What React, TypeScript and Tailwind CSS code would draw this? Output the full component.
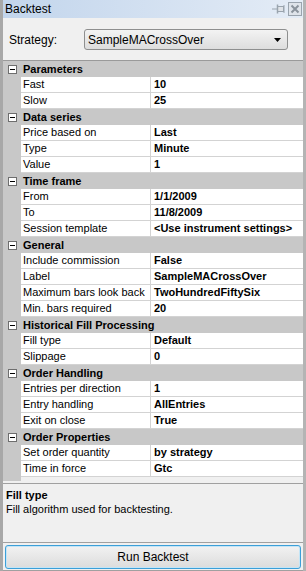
import React from "react";

type Row = { name: string; value: string };
type Category = { title: string; rows: Row[] };

const categories: Category[] = [
    {
        title: "Parameters",
        rows: [
            { name: "Fast", value: "10" },
            { name: "Slow", value: "25" },
        ],
    },
    {
        title: "Data series",
        rows: [
            { name: "Price based on", value: "Last" },
            { name: "Type", value: "Minute" },
            { name: "Value", value: "1" },
        ],
    },
    {
        title: "Time frame",
        rows: [
            { name: "From", value: "1/1/2009" },
            { name: "To", value: "11/8/2009" },
            { name: "Session template", value: "<Use instrument settings>" },
        ],
    },
    {
        title: "General",
        rows: [
            { name: "Include commission", value: "False" },
            { name: "Label", value: "SampleMACrossOver" },
            { name: "Maximum bars look back", value: "TwoHundredFiftySix" },
            { name: "Min. bars required", value: "20" },
        ],
    },
    {
        title: "Historical Fill Processing",
        rows: [
            { name: "Fill type", value: "Default" },
            { name: "Slippage", value: "0" },
        ],
    },
    {
        title: "Order Handling",
        rows: [
            { name: "Entries per direction", value: "1" },
            { name: "Entry handling", value: "AllEntries" },
            { name: "Exit on close", value: "True" },
        ],
    },
    {
        title: "Order Properties",
        rows: [
            { name: "Set order quantity", value: "by strategy" },
            { name: "Time in force", value: "Gtc" },
        ],
    },
];

function MinusBox() {
    return (
        <svg width="9" height="9" viewBox="0 0 9 9" className="block">
            <rect x="0.5" y="0.5" width="8" height="8" fill="#ffffff" stroke="#6e6e6e" />
            <line x1="2" y1="4.5" x2="7" y2="4.5" stroke="#000" />
        </svg>
    );
}

function CategoryHeader({ title }: { title: string }) {
    return (
        <div className="flex h-[16px] items-center bg-[#c8c8c8]">
            <div className="flex w-[18px] justify-center pl-[1px]">
                <MinusBox />
            </div>
            <span className="pl-[2px] font-bold">{title}</span>
        </div>
    );
}

function PropertyRow({ name, value }: Row) {
    return (
        <div className="flex h-[16px] bg-[#c8c8c8]">
            <div className="w-[18px]" />
            <div className="flex w-[130px] items-center border-b border-r border-[#d3d3d3] bg-white pl-[2px]">
                {name}
            </div>
            <div className="flex flex-1 items-center overflow-hidden whitespace-nowrap border-b border-[#d3d3d3] bg-white pl-[3px] font-bold">
                {value}
            </div>
        </div>
    );
}

export default function App() {
    return (
        <div
            className="flex h-[571px] w-[306px] flex-col border-l-[3px] border-r-[3px] border-l-[#a8a8a8] border-r-[#b4b4b4] bg-[#f0f0f0] text-[11px] text-black"
            style={{ fontFamily: '"Liberation Sans", Arial, sans-serif' }}
        >
            <div className="flex h-[18px] items-center justify-between bg-gradient-to-r from-[#c2d5ec] to-[#e4ecf6] pl-[2px] pr-[1px]">
                <span className="text-[12px]">Backtest</span>
                <div className="flex items-center gap-[1px]">
                    <svg width="16" height="12" viewBox="0 0 16 12">
                        <line x1="1" y1="6" x2="6" y2="6" stroke="#9aa4ae" strokeWidth="1" />
                        <rect x="6.5" y="3.5" width="6" height="5" fill="#dfe3e8" stroke="#9aa4ae" />
                        <line x1="6.5" y1="1.5" x2="6.5" y2="10.5" stroke="#9aa4ae" strokeWidth="1.5" />
                        <line x1="13" y1="2" x2="13" y2="10" stroke="#9aa4ae" />
                    </svg>
                    <svg width="14" height="14" viewBox="0 0 14 14">
                        <rect x="0.5" y="0.5" width="13" height="13" fill="#dfe4ea" stroke="#9aa4ae" />
                        <path d="M3.5 3.5 L10.5 10.5 M10.5 3.5 L3.5 10.5" stroke="#8a939c" strokeWidth="2" />
                    </svg>
                </div>
            </div>

            <div className="flex h-[42px] items-center pl-[6px] pr-[15px] pt-[1px]">
                <span className="w-[75px] text-[12px]">Strategy:</span>
                <div className="flex h-[21px] flex-1 items-center justify-between rounded-[3px] border border-[#8e8f8f] bg-gradient-to-b from-[#f3f3f3] to-[#dddddd] pl-[3px] pr-[6px]">
                    <span className="text-[12px]">SampleMACrossOver</span>
                    <svg width="7" height="4" viewBox="0 0 7 4">
                        <path d="M0 0 H7 L3.5 4 Z" fill="#000" />
                    </svg>
                </div>
            </div>

            <div className="flex h-[421px] flex-col border-t border-[#9a9a9a] bg-[#f0f0f0]">
                {categories.map((c) => (
                    <React.Fragment key={c.title}>
                        <CategoryHeader title={c.title} />
                        {c.rows.map((r) => (
                            <PropertyRow key={r.name} name={r.name} value={r.value} />
                        ))}
                    </React.Fragment>
                ))}
                <div className="flex flex-1">
                    <div className="w-[18px] bg-[#c8c8c8]" />
                </div>
            </div>

            <div className="mt-[2px] flex h-[60px] flex-col border-y border-[#a0a0a0] bg-[#f0f0f0] px-[3px] pt-[5px]">
                <span className="font-bold leading-[13px]">Fill type</span>
                <span className="leading-[14px]">Fill algorithm used for backtesting.</span>
            </div>

            <div className="px-[2px] pt-[2px]">
                <button className="flex h-[24px] w-full items-center justify-center rounded-[3px] border border-[#3c9fd8] bg-gradient-to-b from-[#f2f2f2] to-[#dcdcdc] text-[12px] shadow-[inset_0_0_0_1px_#c4e5f6]">
                    Run Backtest
                </button>
            </div>
            <div className="mt-[1px] flex-1 border-t border-[#a0a0a0] bg-[#e3e3e3]" />
        </div>
    );
}
